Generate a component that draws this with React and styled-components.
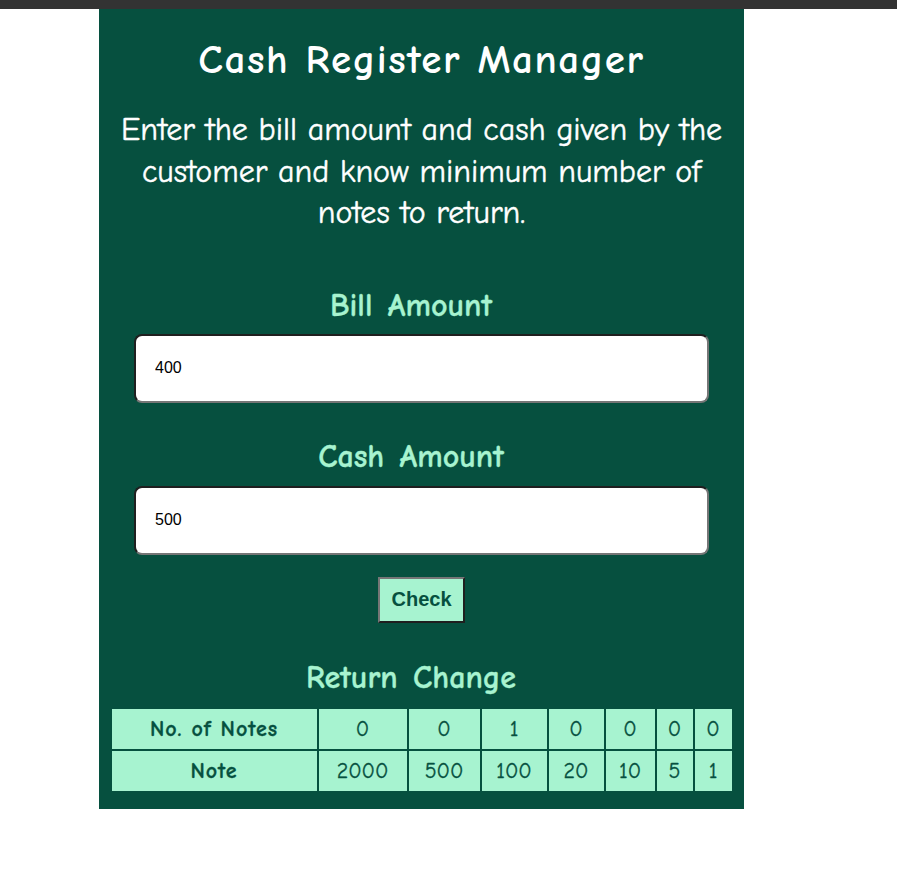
import React from "react";
import styled, { createGlobalStyle } from "styled-components";

const GlobalStyle = createGlobalStyle`
  html, body {
    margin: 0;
    padding: 0;
    background: #ffffff;
  }
  body {
    font-family: "Comic Sans MS", "Comic Neue", "Open Sans", sans-serif;
  }
`;

const TopBar = styled.div`
  height: 9px;
  background: #333333;
`;

const Main = styled.main`
  width: 645px;
  margin-left: 99px;
  background: #06503f;
  padding: 27px 0 16px;
  box-sizing: border-box;
  display: flex;
  flex-direction: column;
  align-items: center;
  font-family: "Comic Sans MS", "Comic Neue", "Open Sans", sans-serif;
`;

const Title = styled.h1`
  margin: 0;
  font-size: 41px;
  line-height: 48px;
  font-weight: 700;
  letter-spacing: 1.6px;
  color: #ffffff;
  text-align: center;
`;

const Intro = styled.p`
  margin: 25px 0 0;
  padding: 0 14px;
  font-size: 32px;
  line-height: 41.5px;
  font-weight: 400;
  color: #ffffff;
  -webkit-text-stroke: 0.45px #ffffff;
  text-align: center;
`;

const Label = styled.label`
  display: block;
  margin-top: ${(p) => p.$top}px;
  padding-right: 21px;
  font-size: 32px;
  line-height: 40px;
  font-weight: 700;
  color: #a7f3d0;
  -webkit-text-stroke: 0.3px #a7f3d0;
  word-spacing: 4px;
  text-align: center;
`;

const AmountInput = styled.input`
  box-sizing: border-box;
  width: 575px;
  height: 69px;
  margin-top: ${(p) => p.$top}px;
  padding: 0 19px;
  border-width: 2px;
  border-style: solid;
  border-color: #1f1f1f #767676 #767676 #1f1f1f;
  border-radius: 8px;
  background: #ffffff;
  font-family: Arial, "Liberation Sans", sans-serif;
  font-size: 16px;
  color: #000000;
  outline: none;
`;

const CheckButton = styled.button`
  box-sizing: border-box;
  height: 46px;
  margin-top: 22px;
  padding: 0 11px;
  background: #a7f3d0;
  border-width: 2px;
  border-style: solid;
  border-color: #767676 #1f1f1f #1f1f1f #767676;
  font-family: Arial, "Liberation Sans", sans-serif;
  font-size: 20px;
  font-weight: 700;
  color: #06503f;
  cursor: pointer;
`;

const SectionHeading = styled.h2`
  margin: 35px 0 0;
  padding-right: 21px;
  font-size: 32px;
  line-height: 40px;
  font-weight: 700;
  color: #a7f3d0;
  -webkit-text-stroke: 0.3px #a7f3d0;
  word-spacing: 4px;
  text-align: center;
`;

const ChangeTable = styled.table`
  margin-top: 9px;
  width: 624px;
  table-layout: fixed;
  border-collapse: separate;
  border-spacing: 2px;
`;

const Col = styled.col`
  width: ${(p) => p.$w}px;
`;

const Cell = styled.td`
  height: 40px;
  padding: 0;
  background: #a7f3d0;
  color: #06503f;
  text-align: center;
  vertical-align: middle;
  font-size: 22px;
  font-weight: ${(p) => (p.$head ? 700 : 400)};
  letter-spacing: ${(p) => (p.$head ? "1px" : "0")};
  -webkit-text-stroke: 0.3px #06503f;
`;

const widths = [205, 88, 71, 65, 55, 49, 36, 37];
const notes = [2000, 500, 100, 20, 10, 5, 1];
const counts = [0, 0, 1, 0, 0, 0, 0];

export default function App() {
  return (
    <>
      <GlobalStyle />
      <TopBar />
      <Main>
        <Title>Cash Register Manager</Title>
        <Intro>
          Enter the bill amount and cash given by the customer and know
          minimum number of notes to return.
        </Intro>
        <Label $top={52} htmlFor="bill">Bill Amount</Label>
        <AmountInput id="bill" type="number" defaultValue="400" $top={8} />
        <Label $top={34} htmlFor="cash">Cash Amount</Label>
        <AmountInput id="cash" type="number" defaultValue="500" $top={9} />
        <CheckButton>Check</CheckButton>
        <SectionHeading>Return Change</SectionHeading>
        <ChangeTable>
          <colgroup>
            {widths.map((w, i) => (
              <Col key={i} $w={w} />
            ))}
          </colgroup>
          <tbody>
            <tr>
              <Cell $head>No. of Notes</Cell>
              {counts.map((c, i) => (
                <Cell key={i}>{c}</Cell>
              ))}
            </tr>
            <tr>
              <Cell $head>Note</Cell>
              {notes.map((n, i) => (
                <Cell key={i}>{n}</Cell>
              ))}
            </tr>
          </tbody>
        </ChangeTable>
      </Main>
    </>
  );
}
